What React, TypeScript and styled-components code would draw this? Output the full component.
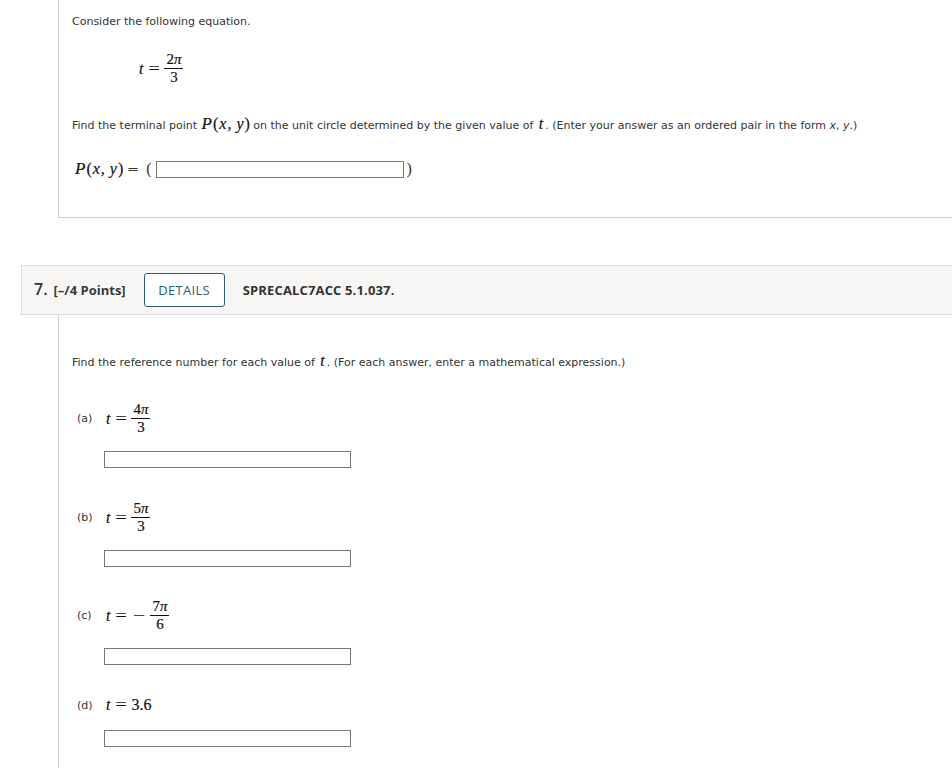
import React from "react"
import styled, { createGlobalStyle } from "styled-components"

const GlobalStyle = createGlobalStyle`
    html, body {
        margin: 0;
        padding: 0;
        background: #fff;
    }
    body {
        font-family: "DejaVu Sans", Verdana, sans-serif;
        font-size: 11px;
        color: #333;
    }
`

const MATH_FONT = '"Liberation Serif", "Times New Roman", serif'

const Page = styled.div`
    width: 952px;
    display: flex;
    flex-direction: column;
`

const QuestionBody = styled.div<{bottomBorder?: boolean}>`
    margin-left: 58px;
    border-left: 1px solid #cfcfcf;
    ${({bottomBorder}) => bottomBorder ? 'border-bottom: 1px solid #cfcfcf;' : ''}
    padding: 0 0 0 13px;
    display: flex;
    flex-direction: column;
`

const Text = styled.p<{top: number}>`
    margin: ${({top}) => top}px 0 0 0;
    height: 16px;
    line-height: 16px;
    font-size: 11px;
    color: #333;
    white-space: nowrap;
`

const MathVar = styled.span<{size?: number; pad?: number}>`
    font-family: ${MATH_FONT};
    font-style: italic;
    font-size: ${({size}) => size || 16}px;
    line-height: 16px;
    color: #111;
    padding: 0 ${({pad}) => pad ?? 1}px;
    -webkit-text-stroke: 0.2px #111;
`

const MathText = styled.span<{gap?: number}>`
    font-family: ${MATH_FONT};
    font-size: 16px;
    line-height: 16px;
    color: #111;
    margin-right: ${({gap}) => gap || 0}px;
    -webkit-text-stroke: 0.2px #111;
`

const Plain = styled.span`
    font-family: "DejaVu Sans", Verdana, sans-serif;
    font-style: italic;
`

const Equation = styled.div<{indent: number; top: number}>`
    margin: ${({top}) => top}px 0 0 ${({indent}) => indent}px;
    display: flex;
    align-items: center;
    font-family: ${MATH_FONT};
    font-size: 16px;
    color: #111;
    height: 33px;
    -webkit-text-stroke: 0.2px #111;
`

const Eq = styled.span`
    display: inline-block;
    width: 12px;
    margin: 0 4px;
    text-align: center;
    font-style: normal;
    transform: scaleX(1.3);
    -webkit-text-stroke: 0;
`

const Minus = styled.span`
    display: inline-block;
    width: 10px;
    margin: 0 6px 0 3px;
    text-align: center;
    transform: scaleX(1.4);
    -webkit-text-stroke: 0;
`

const Frac = styled.span`
    display: inline-flex;
    flex-direction: column;
    align-items: center;
    font-size: 15px;
`

const Num = styled.span`
    line-height: 15px;
    padding: 0 2px 1px;
`

const Den = styled.span`
    line-height: 15px;
    border-top: 1.3px solid #111;
    padding: 1px 2px 0;
    align-self: stretch;
    text-align: center;
`

const Pi = styled.i`
    font-style: italic;
`

const AnswerRow = styled.div`
    margin-top: 27px;
    display: flex;
    align-items: center;
    height: 20px;
    padding-left: 2px;
`

const Paren = styled.span`
    font-family: ${MATH_FONT};
    font-size: 16px;
    color: #333;
    margin: 0 4px 0 3px;
`

const AnswerBox = styled.div<{width: number}>`
    width: ${({width}) => width}px;
    height: 17px;
    box-sizing: border-box;
    border: 1px solid #777;
    background: #fff;
`

const Header = styled.div`
    margin-top: 47px;
    margin-left: 21px;
    height: 48px;
    background: #f7f6f5;
    border: 1px solid #dcdcdc;
    border-right: none;
    display: flex;
    align-items: center;
    padding-left: 12px;
    font-family: "Open Sans", sans-serif;
    color: #333;
`

const Number = styled.span`
    font-size: 16px;
    font-weight: 600;
    margin-right: 6px;
    position: relative;
    top: -1px;
`

const Points = styled.span`
    font-size: 13px;
    font-weight: 700;
    margin-right: 18px;
    color: #3a3a3a;
`

const DetailsButton = styled.button`
    width: 81px;
    height: 34px;
    border: 1px solid #2d6075;
    border-radius: 3px;
    background: #fff;
    color: #2d6075;
    font-family: "Open Sans", sans-serif;
    font-size: 13px;
    letter-spacing: 0.3px;
    padding: 0;
    margin-right: 18px;
`

const Code = styled.span`
    font-size: 13px;
    font-weight: 700;
    color: #333;
    letter-spacing: 0.15px;
`

const Parts = styled.div`
    display: flex;
    flex-direction: column;
`

const Part = styled.div<{top: number}>`
    margin-top: ${({top}) => top}px;
    display: flex;
    flex-direction: column;
`

const PartLine = styled.div`
    display: flex;
    align-items: center;
    min-height: 18px;
    padding-left: 5px;
`

const PartLabel = styled.span`
    width: 28px;
    font-size: 11px;
    color: #333;
`

const PartMath = styled.span`
    display: inline-flex;
    align-items: center;
    font-family: ${MATH_FONT};
    font-size: 16px;
    color: #111;
    -webkit-text-stroke: 0.2px #111;
`

const PartBox = styled.div`
    margin: 16px 0 0 32px;
`

interface IFraction {
    num: string
    den: string
}

const Fraction = ({num, den}: IFraction) => (
    <Frac>
        <Num>{num}<Pi>π</Pi></Num>
        <Den>{den}</Den>
    </Frac>
)

interface IPart {
    label: string
    top: number
    children: React.ReactNode
}

const PartItem = ({label, top, children}: IPart) => (
    <Part top={top}>
        <PartLine>
            <PartLabel>({label})</PartLabel>
            <PartMath>{children}</PartMath>
        </PartLine>
        <PartBox>
            <AnswerBox width={247} />
        </PartBox>
    </Part>
)

const PointXY = () => (
    <>
        <MathVar size={17}>P</MathVar><MathText>(</MathText><MathVar>x</MathVar><MathText gap={4}>,</MathText><MathVar>y</MathVar><MathText>)</MathText>
    </>
)

const App = () => {
    return (
        <Page>
            <GlobalStyle />
            <QuestionBody bottomBorder>
                <Text top={14}>Consider the following equation.</Text>
                <Equation indent={66} top={22}>
                    <MathVar>t</MathVar>
                    <Eq>=</Eq>
                    <Fraction num="2" den="3" />
                </Equation>
                <Text top={31}>
                    Find the terminal point <PointXY /> on the unit circle determined by the given value of <MathVar pad={2}>t</MathVar>. (Enter your answer as an ordered pair in the form <Plain>x</Plain>, <Plain>y</Plain>.)
                </Text>
                <AnswerRow>
                    <PointXY />
                    <Eq>=</Eq>
                    <Paren>(</Paren>
                    <AnswerBox width={248} />
                    <Paren>)</Paren>
                </AnswerRow>
                <div style={{height: 38}} />
            </QuestionBody>

            <Header>
                <Number>7.</Number>
                <Points>[–/4 Points]</Points>
                <DetailsButton>DETAILS</DetailsButton>
                <Code>SPRECALC7ACC 5.1.037.</Code>
            </Header>

            <QuestionBody>
                <Text top={38}>
                    Find the reference number for each value of <MathVar pad={2}>t</MathVar>. (For each answer, enter a mathematical expression.)
                </Text>
                <Parts>
                    <PartItem label="a" top={33}>
                        <MathVar>t</MathVar><Eq>=</Eq><Fraction num="4" den="3" />
                    </PartItem>
                    <PartItem label="b" top={33}>
                        <MathVar>t</MathVar><Eq>=</Eq><Fraction num="5" den="3" />
                    </PartItem>
                    <PartItem label="c" top={32}>
                        <MathVar>t</MathVar><Eq>=</Eq><Minus>−</Minus><Fraction num="7" den="6" />
                    </PartItem>
                    <PartItem label="d" top={31}>
                        <MathVar>t</MathVar><Eq>=</Eq><span>3.6</span>
                    </PartItem>
                </Parts>
                <div style={{height: 40}} />
            </QuestionBody>
        </Page>
    )
}

export default App
